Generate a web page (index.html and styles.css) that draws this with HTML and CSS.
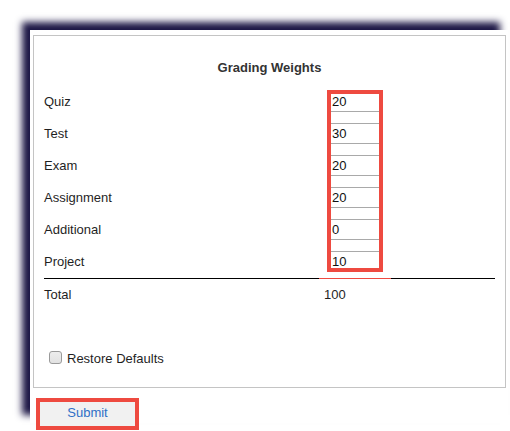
FILE: index.html
```html
<!DOCTYPE html>
<html lang="en">
<head>
<meta charset="utf-8">
<title>Grading Weights</title>
<link rel="stylesheet" href="styles.css">
</head>
<body>
<div class="frame">
  <div class="panel">
    <h2 class="title">Grading Weights</h2>
    <div class="weights">
      <span class="label">Quiz</span><span class="field"><input class="num" type="text" value="20"></span><span class="rest"></span>
      <span class="label">Test</span><span class="field"><input class="num" type="text" value="30"></span><span class="rest"></span>
      <span class="label">Exam</span><span class="field"><input class="num" type="text" value="20"></span><span class="rest"></span>
      <span class="label">Assignment</span><span class="field"><input class="num" type="text" value="20"></span><span class="rest"></span>
      <span class="label">Additional</span><span class="field"><input class="num" type="text" value="0"></span><span class="rest"></span>
      <span class="label last">Project</span><span class="field last marked"><input class="num" type="text" value="10"></span><span class="rest last"></span>
      <span class="highlight"></span>
    </div>
    <div class="total">
      <span class="label">Total</span><span class="sum">100</span><span class="rest"></span>
    </div>
    <label class="restore"><input class="check" type="checkbox"><span>Restore Defaults</span></label>
  </div>
  <button class="submit" type="button">Submit</button>
</div>
</body>
</html>
```

FILE: styles.css
```css
html, body {
  margin: 0;
  padding: 0;
  background: #ffffff;
}

body {
  font-family: "Liberation Sans", Arial, sans-serif;
  font-size: 13px;
  color: #1f1f1f;
  min-height: 431px;
}

.frame {
  margin: 30px 2px 0 30px;
  padding: 5px 2px 0 3px;
  height: 388px;
  background: #ffffff;
  box-shadow: -8px -8px 7px #1d1746;
}

.panel {
  width: 473px;
  box-sizing: border-box;
  border: 1px solid #c4c4c4;
  padding: 0 10px 20px 10px;
  background: #ffffff;
}

.title {
  margin: 24px 0 0 0;
  font-size: 13px;
  line-height: 16px;
  font-weight: bold;
  text-align: center;
  color: #333333;
}

.weights {
  position: relative;
  display: grid;
  grid-template-columns: 275px 72px 104px;
  grid-template-rows: repeat(5, 32px) 33px;
  margin-top: 9.5px;
}

.weights > .label,
.weights > .field,
.weights > .rest {
  display: flex;
  align-items: center;
  line-height: 15px;
}

.weights > .last {
  border-bottom: 1px solid #000000;
}

.weights > .marked {
  border-bottom-color: #ee4a40;
}

.num {
  margin: 0 0 0 10px;
  width: 51px;
  height: 21px;
  box-sizing: border-box;
  border: 1px solid #a9a9a9;
  padding: 0 2px;
  font-family: "Liberation Sans", Arial, sans-serif;
  font-size: 13px;
  color: #111111;
  background: #ffffff;
  outline: none;
}

.highlight {
  position: absolute;
  grid-column: 2 / 3;
  grid-row: 1 / 7;
  top: 4.5px;
  bottom: 6.5px;
  left: 8px;
  right: 8px;
  border: 4px solid #ee4a40;
  pointer-events: none;
}

.total {
  display: grid;
  grid-template-columns: 275px 72px 104px;
  height: 32px;
  align-items: center;
  line-height: 15px;
}

.sum {
  padding-left: 5px;
}

.restore {
  display: flex;
  align-items: center;
  margin-top: 40px;
  line-height: 15px;
}

.check {
  appearance: none;
  -webkit-appearance: none;
  width: 13px;
  height: 13px;
  box-sizing: border-box;
  margin: 0 5px 3px 5px;
  border: 1px solid #9a9a9a;
  border-radius: 3px;
  background: linear-gradient(#ededed, #e2e2e2);
}

.submit {
  display: block;
  margin: 10px 0 0 3px;
  width: 103px;
  height: 32px;
  box-sizing: border-box;
  border: 4px solid #ee4a40;
  background: #f1f1f1;
  color: #2f6fc6;
  font-family: "Liberation Sans", Arial, sans-serif;
  font-size: 13px;
  padding: 0 0 2px 0;
}
```
